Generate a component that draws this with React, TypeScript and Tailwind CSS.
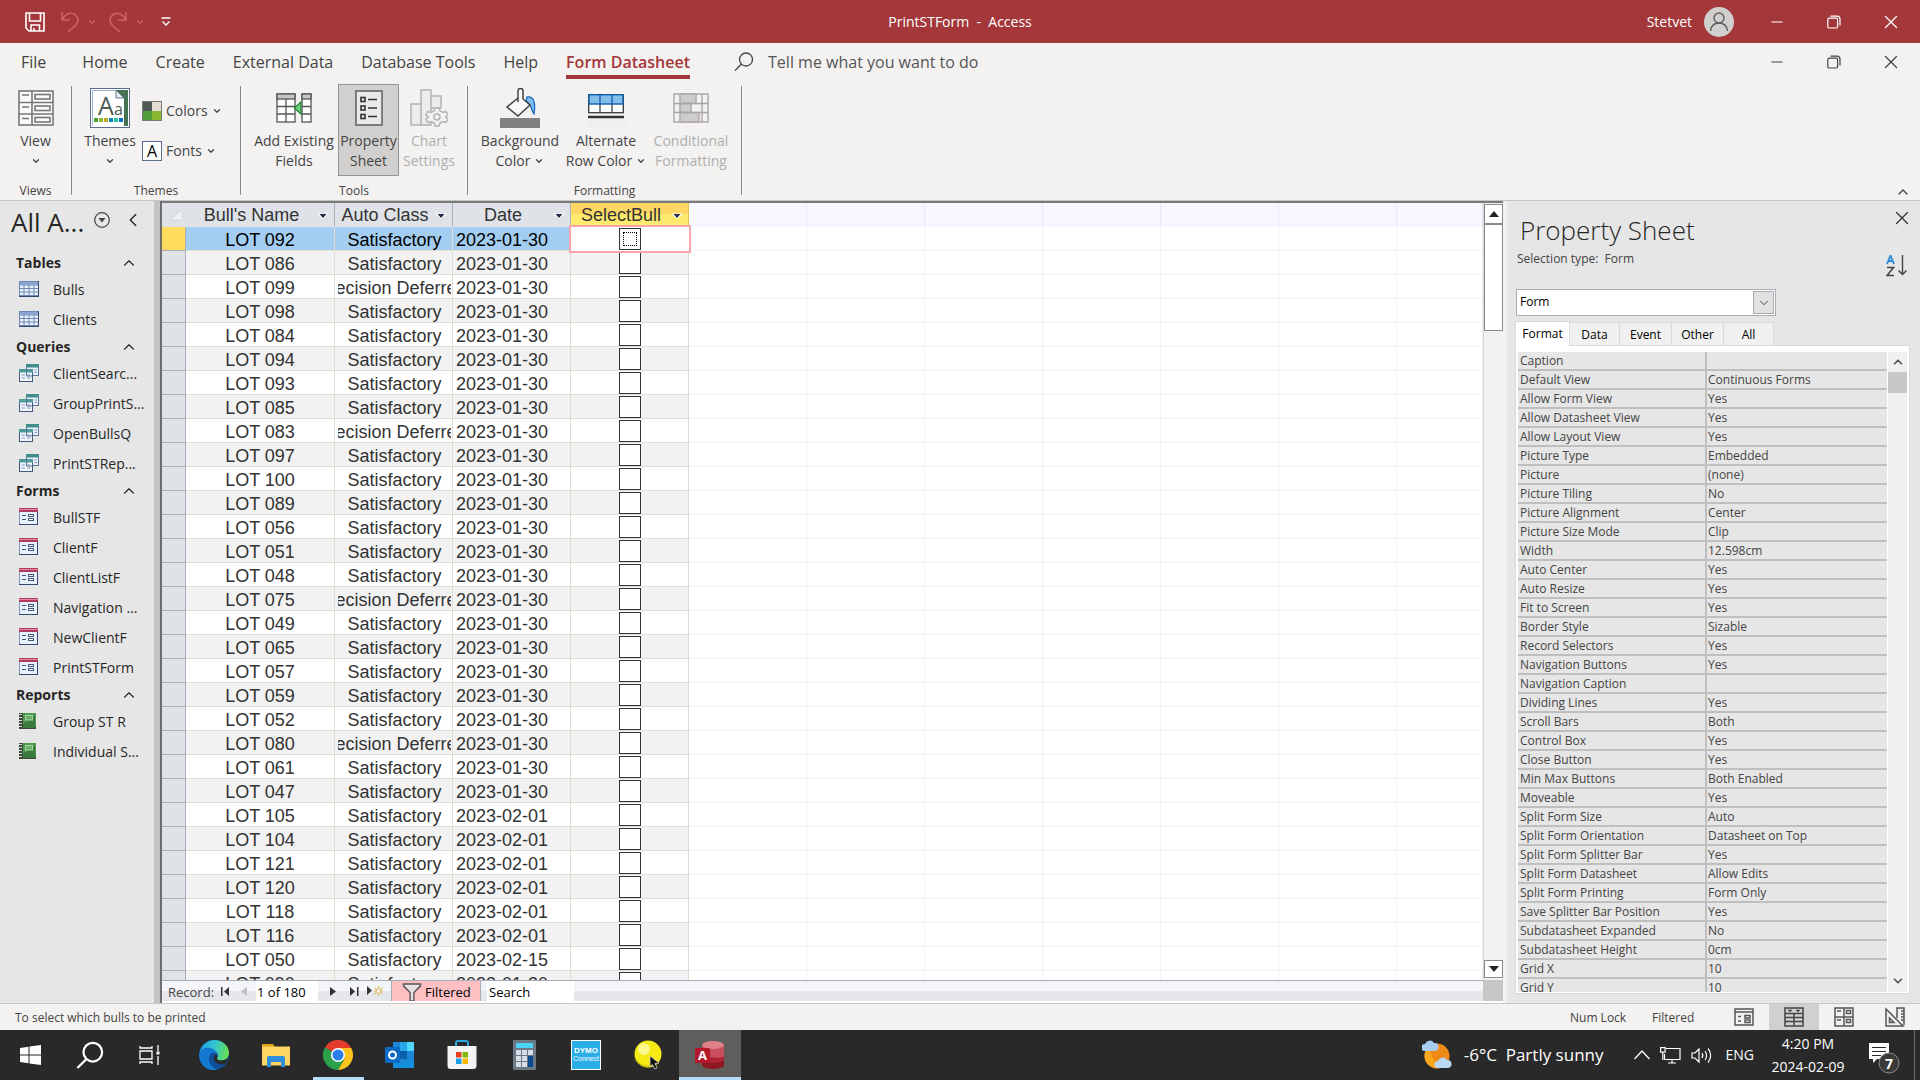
import React from 'react';
import { ChevronDown, ChevronLeft, ChevronUp, Minus, X } from 'lucide-react';

interface NavGroup {
  title: string;
  kind: 'table' | 'query' | 'form' | 'report';
  items: string[];
}

const menuTabs = ['File', 'Home', 'Create', 'External Data', 'Database Tools', 'Help'];

const navGroups: NavGroup[] = [
  { title: 'Tables', kind: 'table', items: ['Bulls', 'Clients'] },
  { title: 'Queries', kind: 'query', items: ['ClientSearc...', 'GroupPrintS...', 'OpenBullsQ', 'PrintSTRep...'] },
  { title: 'Forms', kind: 'form', items: ['BullSTF', 'ClientF', 'ClientListF', 'Navigation ...', 'NewClientF', 'PrintSTForm'] },
  { title: 'Reports', kind: 'report', items: ['Group ST R', 'Individual S...'] },
];

const lots = [
  '092', '086', '099', '098', '084', '094', '093', '085', '083', '097', '100',
  '089', '056', '051', '048', '075', '049', '065', '057', '059', '052', '080',
  '061', '047', '105', '104', '121', '120', '118', '116', '050', '090',
];
const deferred = ['099', '083', '075', '080'];
const february = ['105', '104', '121', '120', '118', '116'];

const records = lots.map((lot) => ({
  lot,
  autoClass: deferred.includes(lot) ? 'Decision Deferred' : 'Satisfactory',
  date: february.includes(lot) ? '2023-02-01' : lot === '050' ? '2023-02-15' : '2023-01-30',
}));

const emptyColumns = [0, 1, 2, 3, 4, 5, 6];

const properties: [string, string][] = [
  ['Caption', ''],
  ['Default View', 'Continuous Forms'],
  ['Allow Form View', 'Yes'],
  ['Allow Datasheet View', 'Yes'],
  ['Allow Layout View', 'Yes'],
  ['Picture Type', 'Embedded'],
  ['Picture', '(none)'],
  ['Picture Tiling', 'No'],
  ['Picture Alignment', 'Center'],
  ['Picture Size Mode', 'Clip'],
  ['Width', '12.598cm'],
  ['Auto Center', 'Yes'],
  ['Auto Resize', 'Yes'],
  ['Fit to Screen', 'Yes'],
  ['Border Style', 'Sizable'],
  ['Record Selectors', 'Yes'],
  ['Navigation Buttons', 'Yes'],
  ['Navigation Caption', ''],
  ['Dividing Lines', 'Yes'],
  ['Scroll Bars', 'Both'],
  ['Control Box', 'Yes'],
  ['Close Button', 'Yes'],
  ['Min Max Buttons', 'Both Enabled'],
  ['Moveable', 'Yes'],
  ['Split Form Size', 'Auto'],
  ['Split Form Orientation', 'Datasheet on Top'],
  ['Split Form Splitter Bar', 'Yes'],
  ['Split Form Datasheet', 'Allow Edits'],
  ['Split Form Printing', 'Form Only'],
  ['Save Splitter Bar Position', 'Yes'],
  ['Subdatasheet Expanded', 'No'],
  ['Subdatasheet Height', '0cm'],
  ['Grid X', '10'],
  ['Grid Y', '10'],
];

/* ---------- title bar ---------- */

const RestoreIcon: React.FC = () => (
  <svg width="14" height="14" viewBox="0 0 14 14" fill="none" stroke="currentColor" strokeWidth="1.2">
    <rect x="0.8" y="3.2" width="9.8" height="9.8" rx="1.5" />
    <path d="M3.5 1.2H10a3 3 0 0 1 3 3v6.3" />
  </svg>
);

const WindowButtons: React.FC = () => (
  <div className="flex pr-px">
    <button aria-label="Minimize" className="flex w-[57px] items-center justify-center">
      <Minus size={18} strokeWidth={1.4} />
    </button>
    <button aria-label="Restore" className="flex w-[57px] items-center justify-center">
      <RestoreIcon />
    </button>
    <button aria-label="Close" className="flex w-[57px] items-center justify-center">
      <X size={22} strokeWidth={1.4} />
    </button>
  </div>
);

const TitleBar: React.FC = () => (
  <header className="grid h-[43px] shrink-0 grid-cols-3 bg-[#a4373a] text-white">
    <div className="flex items-center pt-px pl-[25px]">
      <button aria-label="Save">
        <svg width="20" height="20" viewBox="0 0 20 20" fill="none" stroke="currentColor" strokeWidth="1.6">
          <path d="M1 1h18v18H4l-3-3z" />
          <path d="M4.5 1v8h11V1M6 19v-6h8.500v6M9 16v3" />
        </svg>
      </button>
      <button aria-label="Undo" className="ml-4 flex items-center gap-2 text-[#cf5f66]">
        <svg width="18" height="20" viewBox="0 0 18 20" fill="none" stroke="currentColor" strokeWidth="1.6">
          <path d="M1 0v8h8M1 8C4 2 9 0 13 2c5 3 5 8 2 11l-8 7" />
        </svg>
        <ChevronDown size={10} strokeWidth={3} />
      </button>
      <button aria-label="Redo" className="ml-3 flex items-center gap-2 text-[#cf5f66]">
        <svg width="18" height="20" viewBox="0 0 18 20" fill="none" stroke="currentColor" strokeWidth="1.6">
          <path d="M17 0v8H9M17 8C14 2 9 0 5 2c-5 3-5 8-2 11l8 7" />
        </svg>
        <ChevronDown size={10} strokeWidth={3} />
      </button>
      <button aria-label="Customize Quick Access Toolbar" className="ml-4">
        <svg width="10" height="10" viewBox="0 0 10 10" fill="none" stroke="currentColor" strokeWidth="1.4">
          <path d="M0.500 1h9M1.500 4.500L5 8l3.500-3.500" />
        </svg>
      </button>
    </div>
    <h1 className="flex items-center justify-center pt-px text-sm whitespace-pre">PrintSTForm  -  Access</h1>
    <div className="flex justify-end">
      <button className="flex items-center gap-3 pr-[14px] text-sm">
        Stetvet
        <svg width="30" height="30" viewBox="0 0 30 30">
          <circle cx="15" cy="15" r="15" fill="#d2d0ce" />
          <g fill="none" stroke="#605e5c" strokeWidth="1.4">
            <circle cx="15" cy="11" r="5" />
            <path d="M6.500 24c0-5 4-8 8.500-8s8.500 3 8.500 8" />
          </g>
        </svg>
      </button>
      <WindowButtons />
    </div>
  </header>
);

const MenuBar: React.FC = () => (
  <nav className="flex h-[38px] shrink-0 justify-between bg-[#f3f2f1] text-[#444]">
    <div className="flex pl-[7px] text-base">
      {menuTabs.map((tab) => (
        <button key={tab} className={tab === 'File' ? 'mr-2 px-[14px]' : 'px-[14px]'}>
          {tab}
        </button>
      ))}
      <button className="flex flex-col items-center px-[14px] font-semibold text-[#a4373a]">
        <span className="border-b-4 border-[#a4373a] pt-[6px] leading-[26px]">Form Datasheet</span>
      </button>
      <label className="ml-[30px] flex items-center gap-[14px]">
        <svg width="20" height="20" viewBox="0 0 20 20" fill="none" stroke="currentColor" strokeWidth="1.3">
          <circle cx="12" cy="7.500" r="6.500" />
          <path d="M7.500 12L1 18.500" />
        </svg>
        <input
          aria-label="Tell me what you want to do"
          placeholder="Tell me what you want to do"
          className="w-64 bg-transparent outline-none placeholder:text-[#555]"
        />
      </label>
    </div>
    <WindowButtons />
  </nav>
);

/* ---------- ribbon ---------- */

const ViewIcon: React.FC = () => (
  <svg width="36" height="36" viewBox="0 0 36 36" fill="#fafafa" stroke="#777" strokeWidth="1.6">
    <rect x="1" y="1" width="34" height="34" />
    <path d="M1 12.500h34M1 24h34M14 1v34" />
    <path d="M4 5h7M4 17h7M4 28.500h7" />
    <rect x="17" y="4.500" width="15" height="4.500" />
    <rect x="17" y="16" width="15" height="4.500" />
    <rect x="17" y="27.500" width="15" height="4.500" />
  </svg>
);

const ThemesIcon: React.FC = () => (
  <svg width="40" height="40" viewBox="0 0 40 40">
    <rect x="0.500" y="0.500" width="39" height="39" fill="#fff" stroke="#5b6a8f" />
    <rect x="2" y="2" width="36" height="36" fill="#457255" />
    <path d="M2 2h24l8 8v28H2z" fill="#fff" />
    <path d="M2.500 38V2.500H26" fill="none" stroke="#9cb6d3" />
    <path d="M26 2v8h8z" fill="#e6eef8" stroke="#44546a" strokeWidth="0.800" />
    <text x="8" y="27" fontSize="25" fontFamily="Open Sans, sans-serif" fill="#4d5a52">A</text>
    <text x="24" y="27" fontSize="16" fontFamily="Open Sans, sans-serif" fill="#4d5a52">a</text>
    <rect x="4" y="30" width="4" height="4" fill="#549e39" />
    <rect x="9" y="30" width="4" height="4" fill="#8ab833" />
    <rect x="14" y="30" width="4" height="4" fill="#c0a92b" />
    <rect x="19" y="30" width="4" height="4" fill="#0989b1" />
    <rect x="24" y="30" width="4" height="4" fill="#2bc0b0" />
    <rect x="29" y="30" width="4" height="4" fill="#0a72c0" />
  </svg>
);

const AddFieldsIcon: React.FC = () => (
  <svg width="36" height="30" viewBox="0 0 36 30" fill="#fff" stroke="#555" strokeWidth="1.3">
    <rect x="1" y="1" width="18" height="28" />
    <rect x="1" y="1" width="18" height="5" fill="#c8c6c4" />
    <path d="M1 13.500h18M1 21h18M10 6v23" />
    <rect x="26" y="1" width="9" height="28" />
    <rect x="26" y="1" width="9" height="5" fill="#c8c6c4" />
    <path d="M26 13.500h9M26 21h9" />
    <path d="M25 9v12l-6.500-6z" fill="#6fcf7f" stroke="#228b3c" />
  </svg>
);

const PropertySheetIcon: React.FC = () => (
  <svg width="28" height="36" viewBox="0 0 28 36" fill="#e9e9e9" stroke="#666" strokeWidth="1.6">
    <rect x="1" y="1" width="26" height="34" />
    <g stroke="#333">
      <rect x="6" y="7.500" width="4" height="4" />
      <rect x="6" y="16" width="4" height="4" />
      <rect x="6" y="24.500" width="4" height="4" />
      <path d="M13 9.500h9M13 18h9M13 26.500h9" />
    </g>
  </svg>
);

const ChartIcon: React.FC = () => (
  <svg width="38" height="38" viewBox="0 0 38 38" fill="#ececec" stroke="#b5b3b1" strokeWidth="1.5">
    <path d="M1 15h10v21H1zM11 1h10v35H11zM21 7h10v12H21z" />
    <g transform="translate(27 28)">
      <path
        d="M-2-9h4l1 3 3 1.500 3-1 2 3.500-2.500 2 0 0 2.500 2-2 3.500-3-1-3 1.500-1 3h-4l-1-3-3-1.500-3 1-2-3.500 2.500-2-2.500-2 2-3.500 3 1 3-1.500z"
        fill="#f3f2f1"
      />
      <circle r="3" fill="#f3f2f1" />
    </g>
  </svg>
);

const FillIcon: React.FC = () => (
  <svg width="40" height="40" viewBox="0 0 40 40" fill="none">
    <rect x="0" y="30" width="40" height="10" fill="#808080" />
    <path d="M27 9c6-1 9 4 7 17-3-3-2-10-8-13z" fill="#83bde9" stroke="#0f6cbd" strokeWidth="1.300" />
    <path d="M18 10L7 19l11 9 12-11-7-6V3c0-3.500-5-3.500-5 0v11" fill="#fafafa" stroke="#444" strokeWidth="1.500" />
  </svg>
);

const AlternateIcon: React.FC = () => (
  <svg width="40" height="40" viewBox="0 0 40 40" fill="none">
    <rect x="2.700" y="6.700" width="34.600" height="18" fill="#fff" stroke="#444" strokeWidth="1.400" />
    <path d="M14 16v9M26 16v9" stroke="#444" strokeWidth="1.300" />
    <rect x="3" y="6.700" width="34" height="9.300" fill="#83bde9" stroke="#0f5ea8" strokeWidth="1.400" />
    <path d="M14 7v9M26 7v9" stroke="#0f5ea8" strokeWidth="1.300" />
    <path d="M2 29h36" stroke="#333" strokeWidth="2.500" />
    <rect x="0" y="31" width="40" height="9" fill="#efefef" />
  </svg>
);

const ConditionalIcon: React.FC = () => (
  <svg width="36" height="30" viewBox="0 0 36 30" fill="#f3f2f1" stroke="#a8a6a4" strokeWidth="1.400">
    <rect x="1" y="1" width="34" height="28" />
    <rect x="7" y="1" width="16" height="9.500" fill="#cfcdcb" />
    <rect x="7" y="10.500" width="11" height="9" fill="#cfcdcb" />
    <rect x="7" y="19.500" width="19" height="9.500" fill="#cfcdcb" />
    <path d="M1 10.500h34M1 19.500h34M29 1v28" />
  </svg>
);

interface RibbonButtonProps {
  icon: React.ReactNode;
  lines: [string, string?];
  className: string;
  arrow?: boolean;
  pressed?: boolean;
  disabled?: boolean;
}

const RibbonButton: React.FC<RibbonButtonProps> = ({ icon, lines, className, arrow, pressed, disabled }) => (
  <button
    disabled={disabled}
    aria-pressed={pressed}
    className={`flex h-[92px] flex-col items-center border pt-[3px] text-sm leading-5 whitespace-nowrap ${
      disabled ? 'text-[#b0aeac]' : 'text-[#444]'
    } ${pressed ? 'border-[#979593] bg-[#d2d0ce]' : 'border-transparent'} ${className}`}
  >
    <span className="mb-[3px] flex h-10 items-center justify-center">{icon}</span>
    <span>{lines[0]}</span>
    <span className="flex h-5 items-center gap-1">
      {lines[1]}
      {arrow && <ChevronDown size={10} strokeWidth={3} />}
    </span>
  </button>
);

const RibbonGroup: React.FC<{ title: string; className: string; children: React.ReactNode }> = ({
  title,
  className,
  children,
}) => (
  <>
    <section className={`flex flex-col pt-[3px] ${className}`}>
      <div className="flex h-[92px]">{children}</div>
      <h2 className="mt-[5px] text-center text-xs leading-5 text-[#444]">{title}</h2>
    </section>
    <div className="my-[5px] w-px bg-[#8a8886]" />
  </>
);

const Ribbon: React.FC = () => (
  <div className="flex h-[120px] shrink-0 justify-between border-b border-[#c8c6c4] bg-[#f3f2f1]">
    <div className="flex">
      <RibbonGroup title="Views" className="w-[71px]">
        <RibbonButton icon={<ViewIcon />} lines={['View']} arrow className="w-full" />
      </RibbonGroup>
      <RibbonGroup title="Themes" className="w-[168px]">
        <RibbonButton icon={<ThemesIcon />} lines={['Themes']} arrow className="ml-2 w-[60px]" />
        <div className="flex flex-col gap-5 pt-[17px] pl-[2px] text-sm leading-5 text-[#444]">
          <button className="flex items-center gap-1">
            <svg width="20" height="20" viewBox="0 0 20 20">
              <rect width="20" height="20" fill="#4f5a54" />
              <rect x="10" width="10" height="10" fill="#e6ddd2" />
              <rect y="10" width="10" height="10" fill="#549e39" />
              <rect x="10" y="10" width="10" height="10" fill="#8ab833" />
              <rect x="0.500" y="0.500" width="19" height="19" fill="none" stroke="#777" />
            </svg>
            Colors <ChevronDown size={10} strokeWidth={3} />
          </button>
          <button className="flex items-center gap-1">
            <span className="flex h-5 w-5 items-center justify-center border border-[#5b6a8f] bg-white text-base text-black">
              A
            </span>
            Fonts <ChevronDown size={10} strokeWidth={3} />
          </button>
        </div>
      </RibbonGroup>
      <RibbonGroup title="Tools" className="w-[226px]">
        <RibbonButton icon={<AddFieldsIcon />} lines={['Add Existing', 'Fields']} className="ml-[9px] w-[88px]" />
        <RibbonButton icon={<PropertySheetIcon />} lines={['Property', 'Sheet']} pressed className="w-[61px]" />
        <RibbonButton icon={<ChartIcon />} lines={['Chart', 'Settings']} disabled className="w-[60px]" />
      </RibbonGroup>
      <RibbonGroup title="Formatting" className="w-[273px]">
        <RibbonButton icon={<FillIcon />} lines={['Background', 'Color']} arrow className="ml-2 w-[88px]" />
        <RibbonButton icon={<AlternateIcon />} lines={['Alternate', 'Row Color']} arrow className="w-[84px]" />
        <RibbonButton
          icon={<ConditionalIcon />}
          lines={['Conditional', 'Formatting']}
          disabled
          className="w-[86px]"
        />
      </RibbonGroup>
    </div>
    <button aria-label="Collapse the Ribbon" className="self-end pr-[9px] text-[#444]">
      <ChevronUp size={16} strokeWidth={2} />
    </button>
  </div>
);

/* ---------- navigation pane ---------- */

const NavIcon: React.FC<{ kind: NavGroup['kind'] }> = ({ kind }) => {
  if (kind === 'table') {
    return (
      <svg width="20" height="16" viewBox="0 0 20 16">
        <rect width="20" height="16" fill="#6f88b5" />
        <path d="M0 15.500h20M19.500 0v16" stroke="#33496f" />
        <rect x="1" y="1" width="18" height="3" fill="#8aa4d0" />
        <path
          d="M1 4.500h3.500v2.500H1zM5.500 4.500h4v2.500h-4zM10.500 4.500h4v2.500h-4zM15.500 4.500H19v2.500h-3.500zM1 8h3.500v2.500H1zM5.500 8h4v2.500h-4zM10.500 8h4v2.500h-4zM15.500 8H19v2.500h-3.500zM1 11.500h3.500V14H1zM5.500 11.500h4V14h-4zM10.500 11.500h4V14h-4zM15.500 11.500H19V14h-3.500z"
          fill="#eaf1fb"
        />
      </svg>
    );
  }
  if (kind === 'query') {
    return (
      <svg width="20" height="18" viewBox="0 0 20 18">
        <rect x="7.500" y="0.500" width="12" height="11" fill="#eaf1fa" stroke="#5a7399" />
        <rect x="7" width="13" height="3.500" fill="#3f8d8c" />
        <path d="M12 6h2M15.500 6H18M15.500 8.500H18" stroke="#7f9ac0" />
        <rect x="0.500" y="5.500" width="13" height="12" fill="#f2f6fc" stroke="#41597f" />
        <rect y="5" width="14" height="3.500" fill="#4d9a98" />
        <path d="M2.500 11H6M8 11h3.500M2.500 14H6M8 14h3.500" stroke="#7f9ac0" />
        <path d="M7.500 5v7h6" fill="none" stroke="#5a7399" />
      </svg>
    );
  }
  if (kind === 'form') {
    return (
      <svg width="19" height="17" viewBox="0 0 19 17">
        <rect x="0.500" y="0.500" width="18" height="16" fill="#e9f1fd" stroke="#8497bd" />
        <rect width="19" height="4" fill="#b03a5e" />
        <path d="M0 1.500h19" stroke="#dd8aa2" />
        <path d="M3 7.500h4M3 11.500h4" stroke="#41597f" />
        <rect x="9.500" y="6.500" width="5" height="2" fill="#fff" stroke="#41597f" />
        <rect x="9.500" y="10.500" width="5" height="2" fill="#fff" stroke="#41597f" />
        <path d="M0 16.500h19M18.500 4v13" stroke="#33496f" />
      </svg>
    );
  }
  return (
    <svg width="17" height="16" viewBox="0 0 17 16">
      <rect width="17" height="16" fill="#3c4a3c" />
      <path d="M4 0h13v13l-2 2H4z" fill="#4f9a50" />
      <path d="M4 11l12-9v13H4z" fill="#3b7a3d" />
      <rect x="6.500" y="2.500" width="7" height="4.500" fill="#6aae68" stroke="#a6d6a2" />
      <path d="M0 1.500h3M0 4.500h3M0 7.500h3M0 10.500h3M0 13.500h3" stroke="#d8dcd8" />
    </svg>
  );
};

const NavigationPane: React.FC = () => (
  <aside className="flex w-[162px] shrink-0 border-r-2 border-[#6e6e6e] bg-[#e6e6e6] text-[#262626]">
    <div className="min-w-0 flex-1">
      <div className="flex h-[49px] items-start pl-[11px]">
        <h2 className="w-[83px] text-[26px] leading-[42px] whitespace-nowrap">All A...</h2>
        <button aria-label="Select object type" className="mt-[11px]">
          <svg width="16" height="16" viewBox="0 0 16 16">
            <circle cx="8" cy="8" r="7.300" fill="none" stroke="#444" strokeWidth="1.200" />
            <path d="M4.500 6h7L8 10.500z" fill="#444" />
          </svg>
        </button>
        <button aria-label="Close navigation pane" className="mt-2 ml-3">
          <ChevronLeft size={22} strokeWidth={1.600} />
        </button>
      </div>
      {navGroups.map((group) => (
        <section key={group.title}>
          <h3 className="flex h-6 items-center justify-between pt-px pr-4 pl-4 text-sm font-bold">
            {group.title}
            <button aria-label={`Collapse ${group.title}`}>
              <ChevronUp size={18} strokeWidth={1.500} />
            </button>
          </h3>
          <ul>
            {group.items.map((item) => (
              <li key={item}>
                <a href="#" className="flex h-[30px] items-center pt-px pl-[19px] text-sm whitespace-nowrap">
                  <span className="w-[34px] shrink-0 pb-[2px]">
                    <NavIcon kind={group.kind} />
                  </span>
                  {item}
                </a>
              </li>
            ))}
          </ul>
        </section>
      ))}
    </div>
    <div className="w-[6px] bg-[#c6c4c2]" />
  </aside>
);

/* ---------- datasheet ---------- */

const HeaderCell: React.FC<{ label: string; selected?: boolean }> = ({ label, selected }) => (
  <th
    scope="col"
    className={`h-6 border-r border-b p-0 font-normal ${
      selected
        ? 'border-[#e2c04a] bg-linear-to-b from-[#fdd663] from-50% to-[#ffe96e] to-50%'
        : 'border-[#a9b0bb] border-b-[#dfe3e8] bg-[#dfe3e8]'
    }`}
  >
    <div className="flex h-[23px] items-center pt-[2px]">
      <span className="flex-1 text-center leading-[21px]">{label}</span>
      <button aria-label={`Filter ${label}`} className="mr-[5px] flex w-3 justify-center">
        <svg width="12" height="6" viewBox="0 0 12 6">
          <path d="M0 0.500h12L6 6z" fill="#fff" />
          <path d="M2.500 1h7L6 5z" fill="#222b45" />
        </svg>
      </button>
    </div>
  </th>
);

const Datasheet: React.FC = () => (
  <div className="min-w-0 flex-1 overflow-hidden bg-white">
    <table className="w-full table-fixed border-separate border-spacing-0 font-['Liberation_Sans',Arial,sans-serif] text-lg leading-5 text-[#333]">
      <colgroup>
        <col className="w-6" />
        <col className="w-[149px]" />
        <col className="w-[118px]" />
        <col className="w-[118px]" />
        <col className="w-[118px]" />
        {emptyColumns.map((c) => (
          <col key={c} className={c < 6 ? 'w-[118px]' : ''} />
        ))}
      </colgroup>
      <thead>
        <tr>
          <td className="h-6 bg-[#dfe3e8] p-0">
            <svg width="12" height="12" viewBox="0 0 12 12" className="ml-2">
              <path d="M12 0v11H1z" fill="#eef2f6" stroke="#c3cad3" strokeWidth="0.600" />
            </svg>
          </td>
          <HeaderCell label="Bull's Name" />
          <HeaderCell label="Auto Class" />
          <HeaderCell label="Date" />
          <HeaderCell label="SelectBull" selected />
          {emptyColumns.map((c) => (
            <td key={c} className="border-r border-[#e9e9f2] bg-[#f7f7ff] p-0" />
          ))}
        </tr>
      </thead>
      <tbody>
        {records.map((record, i) => {
          const current = i === 0;
          const cell = `h-6 border-r border-b border-[#e2dcd0] pt-[3px] pr-0 pb-0 ${
            current ? 'bg-[#a3cef1] text-black' : i % 2 ? 'bg-[#f2f2f2]' : 'bg-white'
          }`;
          return (
            <tr key={record.lot}>
              <td
                className={`h-6 border-r border-b border-[#a9b0bb] p-0 ${current ? 'bg-[#ffdb5e]' : 'bg-[#dfe3e8]'}`}
              />
              <td className={`${cell} pl-0 text-center`}>LOT {record.lot}</td>
              <td className={`${cell} pl-0`}>
                <div className="mr-px ml-[3px] flex h-5 justify-center overflow-hidden whitespace-nowrap">
                  {record.autoClass}
                </div>
              </td>
              <td className={`${cell} pl-[3px]`}>{record.date}</td>
              <td
                className={
                  current
                    ? 'relative h-6 bg-white p-0 outline-2 outline-[#f6a5aa]'
                    : `h-6 border-r border-b border-[#e2dcd0] p-0 ${i % 2 ? 'bg-[#f2f2f2]' : 'bg-white'}`
                }
              >
                <label className="flex h-[23px] items-center justify-center">
                  <input
                    type="checkbox"
                    aria-label={`Select LOT ${record.lot}`}
                    className="peer h-[22px] w-[22px] appearance-none border border-[#333] bg-white"
                  />
                  {current && (
                    <span className="pointer-events-none absolute h-[14px] w-[14px] border border-dotted border-black" />
                  )}
                </label>
              </td>
              {emptyColumns.map((c) => (
                <td key={c} className="border-r border-b border-[#f3f2ef] p-0" />
              ))}
            </tr>
          );
        })}
      </tbody>
    </table>
  </div>
);

const VerticalScrollbar: React.FC = () => (
  <div className="flex w-5 shrink-0 flex-col border-l border-[#d5d5d5] bg-[#f2f2f2] pt-px text-[#222]">
    <button aria-label="Scroll up" className="flex h-5 items-center justify-center border border-[#8a8a8a] bg-white">
      <svg width="10" height="6" viewBox="0 0 10 6" fill="currentColor">
        <path d="M0 6l5-6 5 6z" />
      </svg>
    </button>
    <div className="h-[107px] border border-[#8a8a8a] bg-white" />
    <div className="flex-1" />
    <button
      aria-label="Scroll down"
      className="mb-[2px] flex h-[18px] items-center justify-center border border-[#8a8a8a] bg-white"
    >
      <svg width="10" height="6" viewBox="0 0 10 6" fill="currentColor">
        <path d="M0 0l5 6 5-6z" />
      </svg>
    </button>
  </div>
);

const RecordBar: React.FC = () => (
  <div className="flex h-[23px] shrink-0 border-b-2 border-white text-[13px] text-[#444]">
    <div className="flex min-w-0 flex-1 items-stretch border-t border-[#a7adb8] bg-linear-to-b from-[#f4f5f8] from-50% to-[#e5e7eb] to-50% leading-[18px]">
      <span className="w-[59px] pt-[2px] pl-[6px]">Record:</span>
      <button aria-label="First record" className="flex w-5 items-center text-[#333]">
        <svg width="9" height="9" viewBox="0 0 9 9" fill="currentColor">
          <path d="M0 0h1.500v9H0zM8 0v9L3 4.500z" />
        </svg>
      </button>
      <button aria-label="Previous record" className="flex w-[15px] items-center text-[#c0c0c0]">
        <svg width="6" height="9" viewBox="0 0 6 9" fill="currentColor">
          <path d="M6 0v9L0 4.500z" />
        </svg>
      </button>
      <input
        aria-label="Current record"
        defaultValue="1 of 180"
        className="w-[62px] bg-white pt-[2px] pl-px text-black outline-none"
      />
      <button aria-label="Next record" className="ml-3 flex w-5 items-center text-[#333]">
        <svg width="6" height="9" viewBox="0 0 6 9" fill="currentColor">
          <path d="M0 0v9l6-4.500z" />
        </svg>
      </button>
      <button aria-label="Last record" className="flex w-[17px] items-center text-[#333]">
        <svg width="9" height="9" viewBox="0 0 9 9" fill="currentColor">
          <path d="M0 0v9l5-4.500zM7 0h1.500v9H7z" />
        </svg>
      </button>
      <button aria-label="New record" className="flex w-6 items-center gap-[2px] text-[#333]">
        <svg width="16" height="10" viewBox="0 0 16 10">
          <path d="M0 0v9l5-4.500z" fill="#333" />
          <path d="M11.500 0v10M7.500 2l8 6M7.500 8l8-6M7 5h9" stroke="#e0b860" strokeWidth="1.200" />
          <circle cx="11.500" cy="5" r="1.500" fill="#fff" />
        </svg>
      </button>
      <button className="flex w-[90px] items-center border-x border-[#a7adb8] bg-[#ffc0c4] pt-[2px] pl-[10px] text-black">
        <svg width="20" height="18" viewBox="0 0 20 19" className="mr-[3px]">
          <path d="M1 1h18v2l-7 7v9H8v-9L1 3z" fill="#e8e0e0" stroke="#555" strokeWidth="1.500" />
        </svg>
        Filtered
      </button>
      <input
        aria-label="Search records"
        defaultValue="Search"
        className="ml-[6px] w-[87px] bg-white pt-[2px] pl-[2px] text-black outline-none"
      />
    </div>
    <div className="w-5 bg-[#c8c6c4]" />
  </div>
);

/* ---------- property sheet ---------- */

const propertyTabs = [
  { label: 'Data', width: 'w-[50px]' },
  { label: 'Event', width: 'w-[52px]' },
  { label: 'Other', width: 'w-[52px]' },
  { label: 'All', width: 'w-[50px]' },
];

const PropertySheet: React.FC = () => (
  <aside className="flex w-[417px] shrink-0 flex-col border-l-4 border-[#f3f3f3] bg-[#e6e6e6] text-[#444]">
    <div className="flex h-[88px] shrink-0 justify-between">
      <div className="pt-[9px] pl-[10px]">
        <h2 className="pl-[3px] text-[26px] leading-10 font-light text-[#262626]">Property Sheet</h2>
        <p className="text-xs leading-[18px] whitespace-pre">Selection type:  Form</p>
      </div>
      <div className="flex flex-col items-end gap-[26px] pt-[6px] pr-[7px]">
        <button aria-label="Close property sheet" className="text-[#333]">
          <X size={22} strokeWidth={1.400} />
        </button>
        <button aria-label="Sort properties" className="pr-[5px]">
          <svg width="22" height="22" viewBox="0 0 22 22">
            <path d="M1 9L4.500 0.500 8 9M2.300 6.200h4.400" fill="none" stroke="#2b88d8" strokeWidth="1.800" />
            <path d="M1 12.500h6.500L1 20.500h7" fill="none" stroke="#444" strokeWidth="1.600" />
            <path d="M16.500 0v19M12.500 15.500l4 4 4-4" fill="none" stroke="#444" strokeWidth="1.400" />
          </svg>
        </button>
      </div>
    </div>
    <div className="relative ml-[9px] w-[260px] shrink-0">
      <select
        aria-label="Selected object"
        className="block h-[27px] w-full appearance-none border border-[#aaabb3] bg-white pb-[2px] pl-[3px] text-xs text-black outline-none"
      >
        <option>Form</option>
      </select>
      <span className="pointer-events-none absolute top-[2px] right-[2px] flex h-[23px] w-[21px] items-center justify-center border border-[#aaabb3] bg-[#e1e1e1]">
        <ChevronDown size={14} strokeWidth={1.600} />
      </span>
    </div>
    <div role="tablist" className="z-10 mt-1 ml-2 flex h-[25px] shrink-0 items-end text-xs text-black">
      <button
        role="tab"
        aria-selected="true"
        className="-mb-px h-[25px] w-[55px] border border-b-0 border-[#d9d9d9] bg-white pb-px"
      >
        Format
      </button>
      {propertyTabs.map((tab) => (
        <button
          key={tab.label}
          role="tab"
          aria-selected="false"
          className={`h-[23px] border border-b-0 border-l-0 border-[#d9d9d9] bg-[#f0f0f0] pt-[2px] ${tab.width}`}
        >
          {tab.label}
        </button>
      ))}
    </div>
    <div className="mr-[10px] mb-[9px] ml-2 flex min-h-0 flex-1 border border-[#d9d9d9] bg-white pt-[6px] pr-[2px] pb-px pl-[2px]">
      <div className="min-w-0 flex-1 overflow-hidden">
        <table className="w-full table-fixed border-separate border-spacing-0 bg-[#e6e6e6] text-xs leading-4">
          <colgroup>
            <col className="w-[189px]" />
            <col />
          </colgroup>
          <tbody>
            {properties.map(([name, value]) => (
              <tr key={name}>
                <th
                  scope="row"
                  className="h-[19px] border-r-2 border-b-2 border-[#bfbfbf] pt-px pr-0 pb-0 pl-[2px] text-left font-normal whitespace-nowrap"
                >
                  {name}
                </th>
                <td className="h-[19px] border-b-2 border-[#bfbfbf] pt-px pr-0 pb-0 pl-px whitespace-nowrap">
                  {value}
                </td>
              </tr>
            ))}
          </tbody>
        </table>
      </div>
      <div className="ml-px flex w-[19px] flex-col bg-[#f0f0f0] text-[#555]">
        <button aria-label="Scroll properties up" className="flex h-5 items-center justify-center">
          <ChevronUp size={14} strokeWidth={3} />
        </button>
        <div className="h-[21px] bg-[#c8c8ca]" />
        <div className="flex-1" />
        <button aria-label="Scroll properties down" className="flex h-[22px] items-center justify-center">
          <ChevronDown size={14} strokeWidth={3} />
        </button>
      </div>
    </div>
  </aside>
);

/* ---------- status bar ---------- */

const StatusBar: React.FC = () => (
  <footer className="flex h-[27px] shrink-0 items-stretch border-t border-[#c8c6c4] bg-[#f3f2f1] text-xs text-[#444]">
    <p className="flex flex-1 items-center pt-px pl-[15px]">To select which bulls to be printed</p>
    <span className="flex w-[82px] items-center pt-px">Num Lock</span>
    <span className="flex w-[67px] items-center pt-px">Filtered</span>
    <button aria-label="Form View" className="flex w-[50px] items-center justify-center">
      <svg width="20" height="18" viewBox="0 0 20 18" fill="none" stroke="#555" strokeWidth="1.500">
        <path d="M1 1h18v16H1zM1 4h18M4 8.500h3M4 13h3" />
        <rect x="11" y="7.500" width="5" height="2.500" />
        <rect x="11" y="12" width="5" height="2.500" />
      </svg>
    </button>
    <button aria-label="Datasheet View" className="flex w-[50px] items-center justify-center bg-[#d2d0ce]">
      <svg width="20" height="20" viewBox="0 0 20 20" fill="none" stroke="#444" strokeWidth="1.500">
        <rect x="1" y="1" width="18" height="18" />
        <path d="M1 6.500h18M1 10.500h18M1 14.500h18M10 6v13" />
        <path d="M4 3h4l-2 2zM12 3h4l-2 2z" fill="#444" strokeWidth="0.500" />
      </svg>
    </button>
    <button aria-label="Layout View" className="flex w-[50px] items-center justify-center">
      <svg width="20" height="20" viewBox="0 0 20 20" fill="none" stroke="#555" strokeWidth="1.500">
        <path d="M1 1h18v18H1zM1 10h18M10 1v18M3 4h4M3 13h4" />
        <rect x="12.500" y="3.500" width="4" height="3" />
        <rect x="12.500" y="12.500" width="4" height="3" />
      </svg>
    </button>
    <button aria-label="Design View" className="flex w-[51px] items-center justify-center">
      <svg width="20" height="20" viewBox="0 0 20 20" fill="none" stroke="#555" strokeWidth="1.500">
        <path d="M1 2l17 17H1zM4.500 11v4.500H9zM12 11V1h7v17M16 4h3M16 7h3M16 10h3M16 13h3" />
      </svg>
    </button>
  </footer>
);

/* ---------- taskbar ---------- */

interface TaskIconProps {
  label: string;
  width?: string;
  open?: boolean;
  active?: boolean;
  children: React.ReactNode;
}

const TaskButton: React.FC<TaskIconProps> = ({ label, width = 'w-[62px]', open, active, children }) => (
  <button aria-label={label} className={`flex flex-col items-center ${width} ${active ? 'bg-[#5f5e5d]' : ''}`}>
    <span className="flex flex-1 items-center pt-[3px]">{children}</span>
    <span className={`h-[3px] ${active ? 'w-full bg-[#b5dcf8]' : open ? 'w-[51px] bg-[#b5dcf8]' : ''}`} />
  </button>
);

const Taskbar: React.FC = () => (
  <div className="flex h-[50px] shrink-0 justify-between bg-[#292929] text-white">
    <div className="flex">
      <TaskButton label="Start" width="w-[60px]">
        <svg width="21" height="20" viewBox="0 0 21 20" fill="#fff">
          <path d="M0 3l8.500-1.200V9.500H0zM9.500 1.600L21 0v9.500H9.500zM0 10.500h8.500v7.700L0 17zM9.500 10.500H21V20L9.500 18.400z" />
        </svg>
      </TaskButton>
      <TaskButton label="Search" width="w-[60px]">
        <svg width="28" height="28" viewBox="0 0 30 30" fill="none" stroke="#fff" strokeWidth="2.400">
          <circle cx="18" cy="12" r="10" />
          <path d="M11 19.500L1.500 29" />
        </svg>
      </TaskButton>
      <TaskButton label="Task View" width="w-[60px]">
        <svg width="22" height="22" viewBox="0 0 22 22" fill="none" stroke="#fff" strokeWidth="1.300">
          <path d="M1 2v2h12V2M1 20v-2h12v2M1 7h12v8H1zM19 1v6M19 12v9" />
          <path d="M17.500 9h3" strokeWidth="3" />
        </svg>
      </TaskButton>
      <div className="ml-[3px] flex">
        <TaskButton label="Microsoft Edge">
          <svg width="30" height="30" viewBox="0 0 30 30">
            <defs>
              <linearGradient id="edgeTop" x1="0" x2="1" y1="0.300" y2="0.500">
                <stop offset="0" stopColor="#1e9fe0" />
                <stop offset="0.500" stopColor="#33c5cf" />
                <stop offset="1" stopColor="#6ae04f" />
              </linearGradient>
            </defs>
            <circle cx="15" cy="15" r="15" fill="#0f4f97" />
            <path d="M0.500 12C3 4 9 0 15 0c9 0 15 6 15 13 0 5-4 7.500-8 7.500-3 0-4.500-1-4-2.500 2-2 1-6-3-7.500z" fill="url(#edgeTop)" />
            <path d="M0.200 13C2 8 9 6.500 14 9c4 2 5 5 4.500 7-1.500-4-6-4-7.500-1-3 5 1 12 7 14.700C8 32-1 24 0.200 13z" fill="#1479d0" />
            <path d="M18 18c-.5 1.500 1 2.500 4 2.500 3 0 5.500-1 7-2.500-.5 2-1.500 4-3 6-5 1.500-10-1-11-4-.5-2 0-4 1.500-5.500 1.500 0 2.500 2 1.500 3.500z" fill="#292929" />
          </svg>
        </TaskButton>
        <TaskButton label="File Explorer">
          <svg width="28" height="24" viewBox="0 0 28 24">
            <path d="M0 1h11l2 3v6H0z" fill="#e0a21a" />
            <rect y="3.500" width="28" height="19" fill="#fdd663" />
            <path d="M5 24V15a2 2 0 0 1 2-2h14a2 2 0 0 1 2 2v9h-4v-5H9v5z" fill="#2f8fdd" />
          </svg>
        </TaskButton>
        <TaskButton label="Google Chrome" open>
          <svg width="30" height="30" viewBox="0 0 30 30">
            <path d="M15 15L2 7.500A15 15 0 0 1 28 7.500z" fill="#e33b2e" />
            <path d="M15 15L2 7.500A15 15 0 0 0 15 30l6.500-11z" fill="#2ba14b" />
            <path d="M15 8h13.300A15 15 0 0 1 15 30l6.500-11z" fill="#fcc31e" />
            <circle cx="15" cy="15" r="7" fill="#fff" />
            <circle cx="15" cy="15" r="5.500" fill="#2b7de9" />
          </svg>
        </TaskButton>
        <TaskButton label="Outlook">
          <svg width="30" height="28" viewBox="0 0 30 28">
            <rect x="8" y="1" width="21" height="25" fill="#1b86d6" />
            <rect x="15" y="1" width="7" height="9" fill="#28a8ea" />
            <rect x="22" y="1" width="7" height="9" fill="#50d9ff" />
            <rect x="15" y="10" width="7" height="8" fill="#0c5fa8" />
            <path d="M8 18l10 6 11-7v10H8z" fill="#1490df" />
            <rect y="6" width="15" height="16" rx="1" fill="#0a6ac4" />
            <circle cx="7.500" cy="14" r="3.500" fill="none" stroke="#fff" strokeWidth="2" />
          </svg>
        </TaskButton>
        <TaskButton label="Microsoft Store">
          <svg width="30" height="30" viewBox="0 0 30 30">
            <path d="M9 8V3a2 2 0 0 1 2-2h8a2 2 0 0 1 2 2v5" fill="none" stroke="#2ea6dc" strokeWidth="2" />
            <path d="M0.500 6h29v20a3 3 0 0 1-3 3h-23a3 3 0 0 1-3-3z" fill="#f4f4f4" />
            <rect x="9" y="12" width="5.500" height="5.500" fill="#e5401c" />
            <rect x="15.500" y="12" width="5.500" height="5.500" fill="#7fba00" />
            <rect x="9" y="18.500" width="5.500" height="5.500" fill="#1aa0e8" />
            <rect x="15.500" y="18.500" width="5.500" height="5.500" fill="#fbb800" />
          </svg>
        </TaskButton>
        <TaskButton label="Calculator">
          <svg width="23" height="30" viewBox="0 0 23 30">
            <rect width="23" height="30" rx="1" fill="#6c7984" />
            <rect x="3" y="3" width="17" height="5" fill="#4cd2f7" />
            <path
              d="M3 10h5v5H3zM9 10h5v5H9zM15 10h5v5h-5zM3 16h5v5H3zM9 16h5v5H9zM3 22h5v5H3zM9 22h5v5H9z"
              fill="#d6dde6"
            />
            <rect x="15" y="16" width="5" height="11" fill="#0b4a8c" />
          </svg>
        </TaskButton>
        <TaskButton label="DYMO Connect">
          <span className="flex h-[30px] w-[30px] flex-col items-center justify-center border border-white bg-[#2bade6] font-['Liberation_Sans',Arial,sans-serif] text-[8px] leading-[8px]">
            <b>DYMO</b>
            <span className="text-[7px]">Connect</span>
          </span>
        </TaskButton>
        <TaskButton label="Tennis Ball">
          <svg width="30" height="30" viewBox="0 0 30 30">
            <circle cx="15" cy="14" r="13.500" fill="#f5ea14" />
            <circle cx="11" cy="9" r="6" fill="#fdf98a" />
            <path d="M3 20c5 7 15 9 22 3" fill="none" stroke="#b5ab10" strokeWidth="2" strokeDasharray="1 1" />
            <path d="M17 16l9 7-4 .5 2 4.500-2.500 1-2-4.500-2.500 2z" fill="#111" stroke="#ddd" strokeWidth="0.700" />
          </svg>
        </TaskButton>
        <TaskButton label="Access" active>
          <svg width="30" height="30" viewBox="0 0 30 30">
            <path d="M7 5v20c0 5 22 5 22 0V5z" fill="#b02535" />
            <path d="M7 5v8c0 4 22 7 22 2V5z" fill="#c94f5d" />
            <path d="M7 20c5 4 18 4 22 0v5c0 5-22 5-22 0z" fill="#8c1822" />
            <ellipse cx="18" cy="5" rx="11" ry="4" fill="#e0808a" />
            <rect y="8" width="15" height="15" rx="1" fill="#b3182b" />
            <text x="3" y="20" fontSize="13" fontWeight="700" fontFamily="Open Sans, sans-serif" fill="#fff">A</text>
          </svg>
        </TaskButton>
      </div>
    </div>
    <div className="flex items-center">
      <button className="mr-[30px] flex items-center text-[17px] whitespace-pre">
        <svg width="30" height="30" viewBox="0 0 30 30" className="mr-3">
          <circle cx="15" cy="16" r="12.500" fill="#ef8a17" />
          <path d="M2.500 16a12.500 12.500 0 0 1 5-10c0 8 4 14 10 22A12.500 12.500 0 0 1 2.500 16z" fill="#f9a81c" />
          <path d="M3 11a3.500 3.500 0 0 1 0-7 5 5 0 0 1 9-1 4 4 0 0 1 1 8z" fill="#a9cdf0" />
          <path d="M16 28a3.500 3.500 0 0 1 0-7 5 5 0 0 1 9-1 4 4 0 0 1 1 8z" fill="#b9d8f5" />
        </svg>
        -6°C  Partly sunny
      </button>
      <div className="flex items-center gap-[10px]">
        <button aria-label="Show hidden icons">
          <svg width="16" height="10" viewBox="0 0 16 10" fill="none" stroke="#fff" strokeWidth="1.300">
            <path d="M0.500 9L8 1l7.500 8" />
          </svg>
        </button>
        <button aria-label="Network">
          <svg width="21" height="17" viewBox="0 0 21 17" fill="none" stroke="#fff" strokeWidth="1.200">
            <path d="M6 1.500h14v11H4.500V7M12 12.500v3M8 16h8" />
            <rect x="0.600" y="0.600" width="4.500" height="4.500" />
            <path d="M2.800 5v8" />
          </svg>
        </button>
        <button aria-label="Volume">
          <svg width="21" height="17" viewBox="0 0 21 17" fill="none" stroke="#fff" strokeWidth="1.200">
            <path d="M1 6h3l4-4v13l-4-4H1zM11 6c1 1.500 1 3.500 0 5M14 4c2 2.500 2 6.500 0 9M17 1.500c3.500 4 3.500 10 0 14" />
          </svg>
        </button>
        <button className="ml-1 text-sm">ENG</button>
      </div>
      <button className="ml-[14px] flex w-20 flex-col items-center text-sm leading-[23px]">
        <time>4:20 PM</time>
        <time>2024-02-09</time>
      </button>
      <button aria-label="Notifications" className="mr-3 ml-5 pt-[3px]">
        <svg width="34" height="34" viewBox="0 0 34 34">
          <path d="M1 3h20v16H9l-4 4v-4H1z" fill="#fff" />
          <path d="M4 7.500h14M4 11.500h14M4 15.500h9" stroke="#292929" strokeWidth="1.200" />
          <circle cx="21" cy="23" r="10" fill="#3a3a3a" stroke="#8a8a8a" />
          <text x="17" y="28.500" fontSize="14" fontWeight="700" fontFamily="Open Sans, sans-serif" fill="#fff">7</text>
        </svg>
      </button>
      <div className="h-full w-[6px] border-l border-[#6a6a6a]" />
    </div>
  </div>
);

const App: React.FC = () => (
  <div className="flex h-screen flex-col overflow-hidden bg-[#f3f2f1] font-['Open_Sans','Noto_Sans',sans-serif]">
    <TitleBar />
    <MenuBar />
    <Ribbon />
    <main className="flex min-h-0 flex-1">
      <NavigationPane />
      <div className="flex min-w-0 flex-1 flex-col border-t-2 border-[#7a7a7a]">
        <div className="flex min-h-0 flex-1">
          <Datasheet />
          <VerticalScrollbar />
        </div>
        <RecordBar />
      </div>
      <PropertySheet />
    </main>
    <StatusBar />
    <Taskbar />
  </div>
);

export default App;
